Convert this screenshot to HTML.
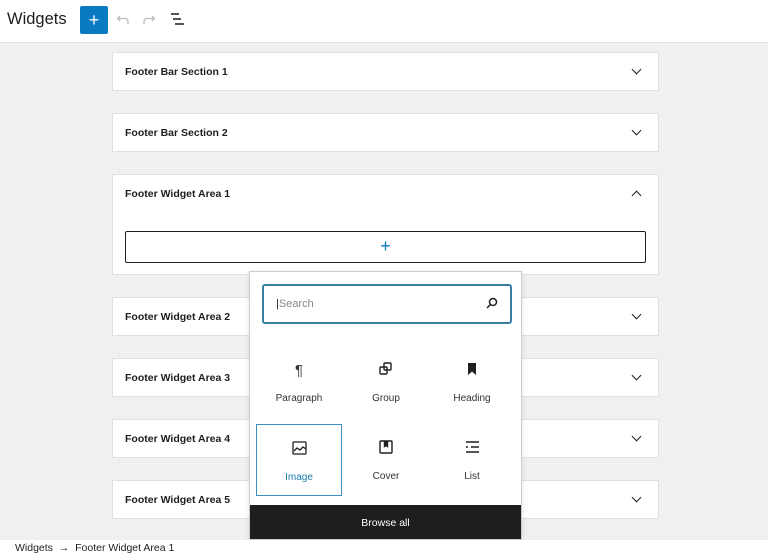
<!DOCTYPE html>
<html><head><style>
*{box-sizing:border-box;margin:0;padding:0}
body{width:768px;height:557px;background:#f0f0f0;font-family:"Liberation Sans",sans-serif;position:relative;overflow:hidden;color:#1e1e1e}
.hdr{position:absolute;left:0;top:0;width:768px;height:43px;background:#fff;border-bottom:1px solid #e2e2e2}
.title{position:absolute;left:7px;top:10px;font-size:16.5px}
.plus{position:absolute;left:80px;top:6px;width:28px;height:28px;background:#0a7ac2;border-radius:2px;color:#fff;font-size:18px;text-align:center;line-height:28px}
.p{position:absolute;left:112px;width:547px;background:#fff;border:1px solid #e0e0e0;font-size:10.5px;font-weight:bold}
.p span{position:absolute;left:12px;top:13px}
.chev{position:absolute;right:18px;top:13px;width:7px;height:7px;border-right:1.5px solid #1e1e1e;border-bottom:1.5px solid #1e1e1e;transform:rotate(45deg)}
.up{transform:rotate(-135deg);top:17px}
.pop{position:absolute;left:249px;top:271px;width:273px;height:269px;background:#fff;border:1px solid #ccc;box-shadow:0 2px 6px rgba(0,0,0,.1)}
.search{position:absolute;left:12px;top:12px;width:250px;height:40px;border:2px solid #3a7ea6;border-radius:3px;font-size:11px;color:#888;padding:12px 12px}
.tile{position:absolute;width:86px;height:72px;text-align:center;font-size:10px;color:#333}
.tile .ic{height:18px;margin-top:16px;font-size:15px}
.tile .lb{margin-top:13px}
.browse{position:absolute;left:0;bottom:0;width:271px;height:34px;background:#1e1e1e;color:#fff;font-size:10.5px;text-align:center;line-height:36px}
.foot{position:absolute;left:0;top:540px;width:768px;height:17px;background:#fff;font-size:10.5px;padding:2px 15px}
</style></head><body>
<div class="hdr">
<div class="title">Widgets</div>
<div class="plus">+</div>
<svg style="position:absolute;left:116px;top:13px" width="14" height="14" viewBox="0 0 14 14" fill="none" stroke="#bbb" stroke-width="1.3"><path d="M4 3L1.5 5.5 4 8M1.5 5.5H9a3 3 0 0 1 3 3V11"/></svg>
<svg style="position:absolute;left:142px;top:13px" width="14" height="14" viewBox="0 0 14 14" fill="none" stroke="#bbb" stroke-width="1.3"><path d="M10 3l2.5 2.5L10 8M12.5 5.5H5a3 3 0 0 0-3 3V11"/></svg>
<svg style="position:absolute;left:170px;top:12px" width="16" height="14" viewBox="0 0 16 14" stroke="#1e1e1e" stroke-width="1.5"><path d="M1 2h8M3 7h8M5 12h9"/></svg>
</div>
<div class="p" style="top:52px;height:39px"><span>Footer Bar Section 1</span><div class="chev"></div></div>
<div class="p" style="top:113px;height:39px"><span>Footer Bar Section 2</span><div class="chev"></div></div>
<div class="p" style="top:174px;height:101px"><span>Footer Widget Area 1</span><div class="chev up"></div>
<div style="position:absolute;left:12px;top:56px;width:521px;height:32px;border:1px solid #1e1e1e;border-radius:2px;text-align:center;color:#0a7ac2;font-size:18px;font-weight:normal;line-height:29px">+</div></div>
<div class="p" style="top:297px;height:39px"><span>Footer Widget Area 2</span><div class="chev"></div></div>
<div class="p" style="top:358px;height:39px"><span>Footer Widget Area 3</span><div class="chev"></div></div>
<div class="p" style="top:419px;height:39px"><span>Footer Widget Area 4</span><div class="chev"></div></div>
<div class="p" style="top:480px;height:39px"><span>Footer Widget Area 5</span><div class="chev"></div></div>
<div class="pop">
<div class="search"><span style="color:#1e1e1e">|</span>Search
<svg style="position:absolute;right:12px;top:11px" width="12" height="12" viewBox="0 0 12 12" fill="none" stroke="#1e1e1e" stroke-width="1.5"><circle cx="7" cy="5" r="3.5"/><path d="M4.5 7.5L1 11"/></svg></div>
<div class="tile" style="left:6px;top:74px"><div class="ic">¶</div><div class="lb">Paragraph</div></div>
<div class="tile" style="left:93px;top:74px"><div class="ic"><svg width="14" height="14" viewBox="0 0 14 14" fill="none" stroke="#1e1e1e" stroke-width="1.4"><rect x="1" y="5" width="7" height="7" rx="1"/><rect x="5" y="1" width="7" height="7" rx="1"/></svg></div><div class="lb">Group</div></div>
<div class="tile" style="left:179px;top:74px"><div class="ic"><svg width="12" height="14" viewBox="0 0 12 14"><path d="M2 1h8v12L6 9.5 2 13z" fill="#1e1e1e"/></svg></div><div class="lb">Heading</div></div>
<div class="tile" style="left:6px;top:152px;border:1px solid #3a8fc0;color:#1a7ab0"><div class="ic"><svg width="15" height="14" viewBox="0 0 15 14" fill="none" stroke="#1e1e1e" stroke-width="1.3"><rect x="1" y="1" width="13" height="12" rx="1"/><path d="M2 10l3-3 3 2 3-3 3 2"/></svg></div><div class="lb">Image</div></div>
<div class="tile" style="left:93px;top:152px"><div class="ic"><svg width="14" height="14" viewBox="0 0 14 14" fill="none" stroke="#1e1e1e" stroke-width="1.4"><rect x="1" y="1" width="12" height="12" rx="1"/><path d="M5.5 1v5.5L7 5.5l1.5 1V1" fill="#1e1e1e"/></svg></div><div class="lb">Cover</div></div>
<div class="tile" style="left:179px;top:152px"><div class="ic"><svg width="15" height="14" viewBox="0 0 15 14" stroke="#1e1e1e" stroke-width="1.4"><path d="M1 2h13M6 7h8M1 12h13M1 7h2"/></svg></div><div class="lb">List</div></div>
<div class="browse">Browse all</div>
</div>
<div class="foot">Widgets &nbsp;→&nbsp; Footer Widget Area 1</div>
</body></html>
